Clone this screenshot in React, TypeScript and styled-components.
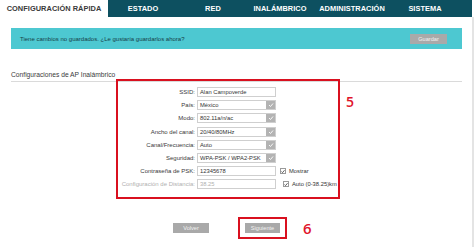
import React, { useState } from 'react'
import styled, { createGlobalStyle } from 'styled-components'

const Global = createGlobalStyle`
  html, body { margin: 0; padding: 0; background: #fff; }
  body { font-family: "Liberation Sans", Arial, sans-serif; color: #333; }
  * { box-sizing: border-box; }
`

const Page = styled.div`
  display: flex;
  width: 474px;
  height: 247px;
  overflow: hidden;
`

const Main = styled.div`
  width: 472px;
  display: flex;
  flex-direction: column;
  position: relative;
`

const Rail = styled.div`
  width: 2px;
  margin-top: 17px;
  background: #e4e4e4;
`

const Nav = styled.nav`
  display: flex;
  height: 17px;
  background: #0d5060;
`

const Tab = styled.div<{ $w: number; $active?: boolean }>`
  width: ${p => p.$w}px;
  display: flex;
  align-items: center;
  justify-content: center;
  font-size: 7.4px;
  font-weight: bold;
  letter-spacing: 0.05px;
  white-space: nowrap;
  color: ${p => (p.$active ? '#3a3a3a' : '#fff')};
  background: ${p => (p.$active ? '#fff' : 'transparent')};
`

const Notice = styled.div`
  margin: 11px 10px 0 11px;
  height: 21px;
  background: #4dc8d1;
  display: flex;
  align-items: center;
  justify-content: space-between;
  padding: 0 15px 0 9px;
  font-size: 6px;
  color: #173f47;
`

const GrayButton = styled.button<{ $w: number }>`
  width: ${p => p.$w}px;
  height: 10px;
  border: none;
  padding: 0;
  background: #a9a9a9;
  color: #f2f2f2;
  font-family: inherit;
  font-size: 5.6px;
  line-height: 10px;
`

const Title = styled.div`
  margin: 21px 10px 0 11px;
  padding-bottom: 2px;
  border-bottom: 1px solid #dadada;
  font-size: 6.7px;
  color: #3a3a3a;
  line-height: 9px;
`

const Form = styled.div`
  display: grid;
  grid-template-columns: 197px 79px auto;
  grid-auto-rows: 10px;
  row-gap: 3.2px;
  margin-top: 5px;
  align-items: center;
`

const Label = styled.div<{ $muted?: boolean }>`
  text-align: right;
  padding-right: 2px;
  font-size: 6px;
  white-space: nowrap;
  color: ${p => (p.$muted ? '#b0b0b0' : '#3a3a3a')};
`

const Field = styled.div<{ $muted?: boolean }>`
  height: 10px;
  border: 1px solid #cfcfcf;
  background: #fff;
  display: flex;
  align-items: center;
  padding-left: 2px;
  font-size: 5.8px;
  color: ${p => (p.$muted ? '#b0b0b0' : '#333')};
  position: relative;
  white-space: nowrap;
  overflow: hidden;
`

const Arrow = styled.span`
  position: absolute;
  right: 0;
  top: 0;
  width: 9px;
  height: 8px;
  background: #b3b3b3;
  display: flex;
  align-items: center;
  justify-content: center;
`

const Extra = styled.label<{ $shift?: number }>`
  display: flex;
  align-items: center;
  gap: 3px;
  padding-left: ${p => p.$shift ?? 4}px;
  font-size: 5.8px;
  color: #333;
  white-space: nowrap;
`

const Box = styled.span`
  width: 6px;
  height: 6px;
  border: 1px solid #9a9a9a;
  background: #fff;
  display: flex;
  align-items: center;
  justify-content: center;
`

const Actions = styled.div`
  display: flex;
  align-items: center;
  margin-top: 28px;
  padding-left: 173px;
`

const Highlight = styled.div`
  margin-left: 29px;
  padding: 4px 5px;
  border: 2px solid #d9101f;
  display: flex;
`

const Mark = styled.span<{ $size: number }>`
  color: #e0142a;
  font-family: "Open Sans", "Liberation Sans", sans-serif;
  font-weight: 600;
  font-size: ${p => p.$size}px;
  line-height: 1;
`

const Six = styled(Mark)`
  margin-left: 16px;
`

const RedFrame = styled.div`
  position: absolute;
  left: 116px;
  top: 79px;
  width: 224px;
  height: 120px;
  border: 2px solid #d9101f;
  pointer-events: none;
`

const Five = styled(Mark)`
  position: absolute;
  left: 346px;
  top: 95px;
`

const Chevron = () => (
  <svg width="6" height="6" viewBox="0 0 6 6">
    <path d="M1 3 L2.5 4.5 L5 1.5" fill="none" stroke="#fff" strokeWidth="0.9" />
  </svg>
)

const Check = () => (
  <svg width="5" height="5" viewBox="0 0 5 5">
    <path d="M0.6 2.6 L1.9 3.9 L4.4 0.9" fill="none" stroke="#222" strokeWidth="0.9" />
  </svg>
)

type Row = { label: string; value: string; select?: boolean; muted?: boolean; extra?: string; shift?: number }

const rows: Row[] = [
  { label: 'SSID:', value: 'Alan Campoverde' },
  { label: 'País:', value: 'México', select: true },
  { label: 'Modo:', value: '802.11a/n/ac', select: true },
  { label: 'Ancho del canal:', value: '20/40/80MHz', select: true },
  { label: 'Canal/Frecuencia:', value: 'Auto', select: true },
  { label: 'Seguridad:', value: 'WPA-PSK / WPA2-PSK', select: true },
  { label: 'Contraseña de PSK:', value: '12345678', extra: 'Mostrar', shift: 4 },
  { label: 'Configuración de Distancia:', value: '38.25', muted: true, extra: 'Auto  (0-38.25)km', shift: 7 },
]

const tabs = [
  { name: 'CONFIGURACIÓN RÁPIDA', w: 108 },
  { name: 'ESTADO', w: 70 },
  { name: 'RED', w: 70 },
  { name: 'INALÁMBRICO', w: 64 },
  { name: 'ADMINISTRACIÓN', w: 80 },
  { name: 'SISTEMA', w: 66 },
]

export default function App() {
  const [current] = useState('CONFIGURACIÓN RÁPIDA')
  return (
    <>
      <Global />
      <Page>
        <Main>
          <Nav>
            {tabs.map(t => (
              <Tab key={t.name} $w={t.w} $active={t.name === current}>
                {t.name}
              </Tab>
            ))}
          </Nav>
          <Notice>
            <span>Tiene cambios no guardados. ¿Le gustaría guardarlos ahora?</span>
            <GrayButton $w={37}>Guardar</GrayButton>
          </Notice>
          <Title>Configuraciones de AP Inalámbrico</Title>
          <Form>
            {rows.map(r => (
              <React.Fragment key={r.label}>
                <Label $muted={r.muted}>{r.label}</Label>
                <Field $muted={r.muted}>
                  {r.value}
                  {r.select && (
                    <Arrow>
                      <Chevron />
                    </Arrow>
                  )}
                </Field>
                {r.extra ? (
                  <Extra $shift={r.shift}>
                    <Box>
                      <Check />
                    </Box>
                    {r.extra}
                  </Extra>
                ) : (
                  <span />
                )}
              </React.Fragment>
            ))}
          </Form>
          <Actions>
            <GrayButton $w={36}>Volver</GrayButton>
            <Highlight>
              <GrayButton $w={35}>Siguiente</GrayButton>
            </Highlight>
            <Six $size={15}>6</Six>
          </Actions>
          <RedFrame />
          <Five $size={14}>5</Five>
        </Main>
        <Rail />
      </Page>
    </>
  )
}
